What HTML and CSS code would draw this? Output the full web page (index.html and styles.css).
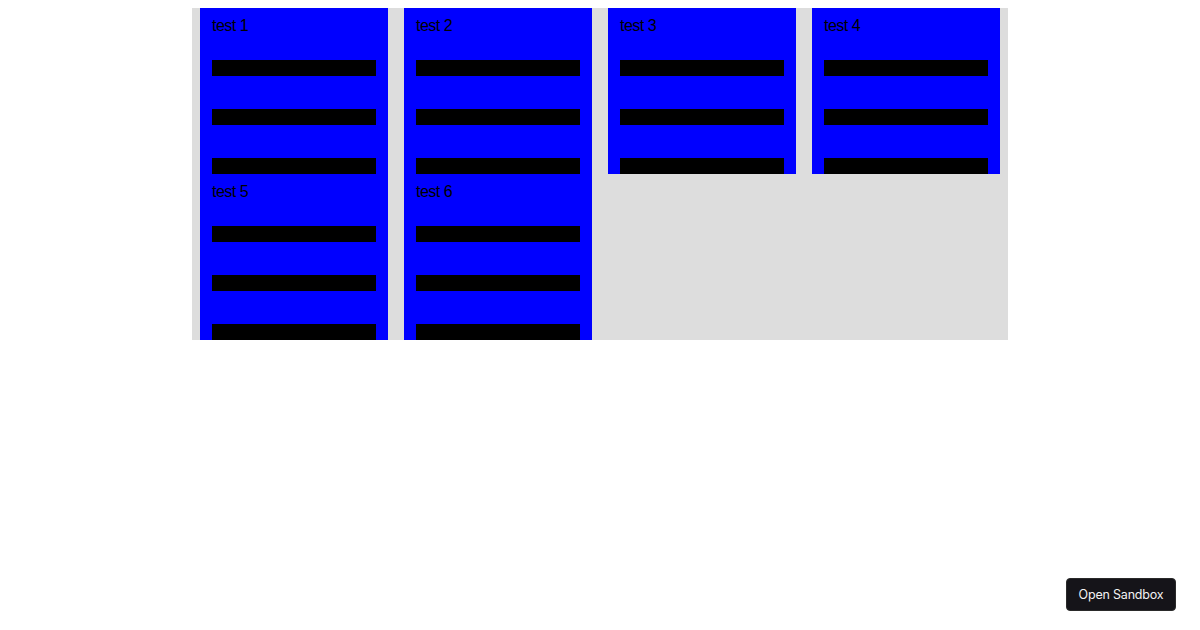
FILE: index.html
```html
<!DOCTYPE html>
<html>
<head>
<meta charset="utf-8">
<link rel="stylesheet" href="styles.css">
</head>
<body>
<div class="grid">
  <div class="card"><div class="title">test 1</div><div class="bar first"></div><div class="bar"></div><div class="bar"></div></div>
  <div class="card"><div class="title">test 2</div><div class="bar first"></div><div class="bar"></div><div class="bar"></div></div>
  <div class="card"><div class="title">test 3</div><div class="bar first"></div><div class="bar"></div><div class="bar"></div></div>
  <div class="card"><div class="title">test 4</div><div class="bar first"></div><div class="bar"></div><div class="bar"></div></div>
  <div class="card"><div class="title">test 5</div><div class="bar first"></div><div class="bar"></div><div class="bar"></div></div>
  <div class="card"><div class="title">test 6</div><div class="bar first"></div><div class="bar"></div><div class="bar"></div></div>
</div>
<button class="sandbox">Open Sandbox</button>
</body>
</html>
```
FILE: styles.css
```css
html, body {
  background: #ffffff;
}
body {
  margin: 8px;
  font-family: "Liberation Sans", Arial, sans-serif;
}
.grid {
  width: 816px;
  margin: 0 auto;
  background: #dddddd;
  display: grid;
  grid-template-columns: repeat(4, 188px);
  grid-auto-rows: 166px;
  column-gap: 16px;
  padding: 0 8px;
  box-sizing: border-box;
}
.card {
  background: #0000ff;
  padding: 9px 12px 0;
  box-sizing: border-box;
}
.title {
  font-size: 16px;
  line-height: 18px;
  letter-spacing: -0.5px;
  color: #000;
}
.bar {
  height: 16px;
  background: #000;
  margin-top: 33px;
}
.bar.first {
  margin-top: 25px;
}
.sandbox {
  position: fixed;
  right: 24px;
  bottom: 19px;
  width: 110px;
  height: 33px;
  background: #151419;
  color: #f2f2f2;
  border: 1px solid #2a2a2a;
  border-radius: 4px;
  font-family: Inter, "Liberation Sans", sans-serif;
  font-size: 12.5px;
  letter-spacing: -0.2px;
  padding: 0;
}
```
